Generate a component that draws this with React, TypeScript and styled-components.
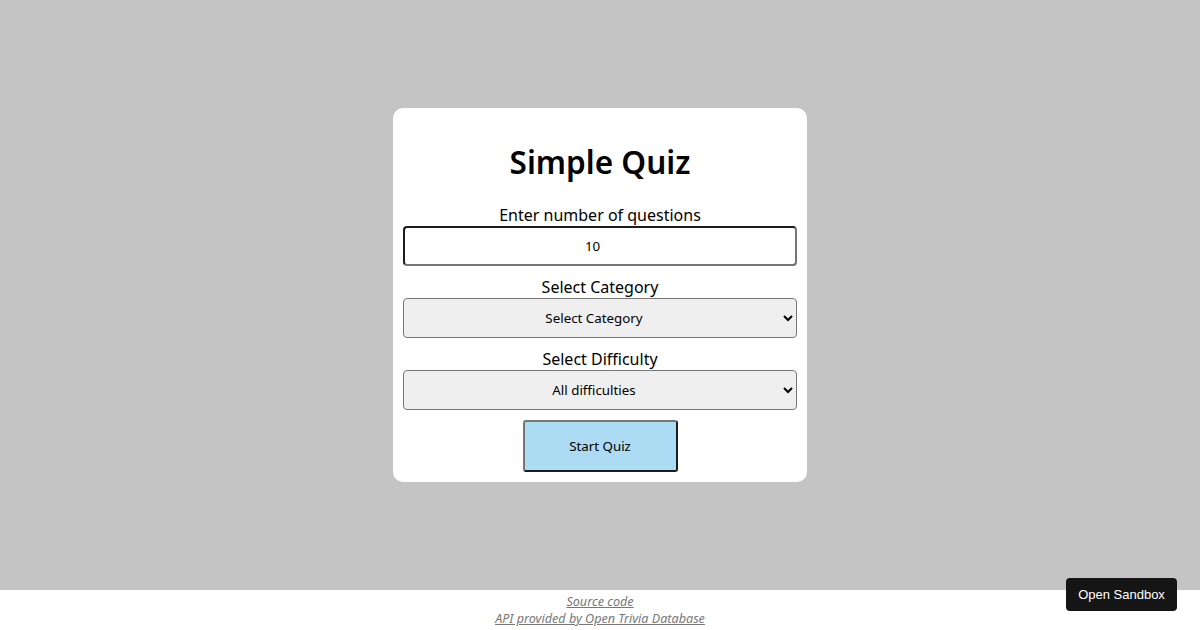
import React from "react";
import styled, { createGlobalStyle } from "styled-components";

const Global = createGlobalStyle`
  html, body { margin: 0; padding: 0; }
  body { font-family: "Noto Sans", "Open Sans", sans-serif; background: #ffffff; }
  * { box-sizing: border-box; }
`;

const Page = styled.div`
  display: flex;
  flex-direction: column;
  width: 1200px;
  height: 630px;
`;

const Main = styled.main`
  height: 590px;
  background: #c4c4c4;
  display: flex;
  align-items: center;
  justify-content: center;
`;

const Card = styled.div`
  width: 414px;
  background: #ffffff;
  border-radius: 10px;
  padding: 32px 10px 10px;
  display: flex;
  flex-direction: column;
  align-items: stretch;
`;

const Title = styled.h1`
  margin: 0 0 20px;
  font-family: "Noto Sans", "Open Sans", sans-serif;
  font-size: 31.5px;
  font-weight: 600;
  line-height: 44px;
  text-align: center;
  color: #000;
`;

const Group = styled.div`
  display: flex;
  flex-direction: column;
  margin-bottom: 10px;
`;

const Label = styled.label`
  font-size: 16px;
  line-height: 22px;
  text-align: center;
  color: #000;
`;

const NumberInput = styled.input`
  height: 40px;
  width: 100%;
  border: 2px solid;
  border-color: #1c1c1c #767676 #767676 #1c1c1c;
  border-radius: 4px;
  background: #fff;
  font-family: "Noto Sans", sans-serif;
  font-size: 13.33px;
  text-align: center;
  color: #000;
  outline: none;
`;

const Select = styled.select`
  height: 40px;
  width: 100%;
  border: 1px solid #767676;
  border-radius: 4px;
  background: #efefef;
  font-family: "Noto Sans", sans-serif;
  font-size: 13.33px;
  text-align: center;
  text-align-last: center;
  color: #000;
  padding: 0 4px;
`;

const StartButton = styled.button`
  align-self: center;
  width: 155px;
  height: 52px;
  background: #acdbf4;
  border: 2px solid;
  border-color: #767676 #1c1c1c #1c1c1c #767676;
  border-radius: 3px;
  font-family: "Noto Sans", sans-serif;
  font-size: 13.33px;
  color: #000;
  cursor: pointer;
`;

const Footer = styled.footer`
  height: 40px;
  background: #fff;
  display: flex;
  flex-direction: column;
  align-items: center;
  padding-top: 3px;
`;

const FooterLink = styled.a`
  font-size: 12.6px;
  line-height: 17px;
  font-style: italic;
  color: #777;
  text-decoration: underline;
`;

const SandboxButton = styled.a`
  position: fixed;
  left: 1066px;
  top: 578px;
  width: 111px;
  height: 33px;
  background: #151515;
  color: #fff;
  border-radius: 4px;
  display: flex;
  align-items: center;
  justify-content: center;
  font-family: "Liberation Sans", Arial, sans-serif;
  font-size: 13px;
  text-decoration: none;
`;

export default function App() {
  return (
    <Page>
      <Global />
      <Main>
        <Card>
          <Title>Simple Quiz</Title>
          <Group>
            <Label>Enter number of questions</Label>
            <NumberInput type="number" defaultValue={10} />
          </Group>
          <Group>
            <Label>Select Category</Label>
            <Select defaultValue="">
              <option value="">Select Category</option>
            </Select>
          </Group>
          <Group>
            <Label>Select Difficulty</Label>
            <Select defaultValue="">
              <option value="">All difficulties</option>
            </Select>
          </Group>
          <StartButton>Start Quiz</StartButton>
        </Card>
      </Main>
      <Footer>
        <FooterLink href="#">Source code</FooterLink>
        <FooterLink href="#">API provided by Open Trivia Database</FooterLink>
      </Footer>
      <SandboxButton href="#">Open Sandbox</SandboxButton>
    </Page>
  );
}
